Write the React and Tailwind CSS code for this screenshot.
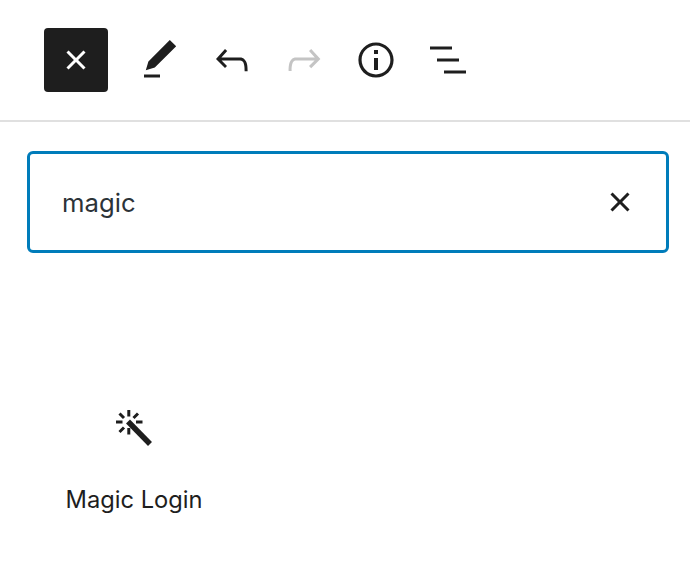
const Icon = ({ d, className = "" }) => (
  <svg viewBox="0 0 24 24" className={`w-12 h-12 fill-current ${className}`}>
    <path d={d} />
  </svg>
);

const closeSmall =
  "M12 13.06l3.712 3.713 1.061-1.06L13.061 12l3.712-3.712-1.06-1.06L12 10.938 8.288 7.227l-1.061 1.06L10.939 12l-3.712 3.712 1.06 1.061L12 13.061z";
const pencil = "M20.1 5.1L16.9 2 6.2 12.7l-1.3 4.4 4.5-1.3L20.1 5.1zM4 20.8h8v-1.5H4v1.5z";
const undo =
  "M18.3 11.7c-.6-.6-1.4-.9-2.3-.9H6.7l2.9-3.3-1.1-1-4.5 5L8.5 16l1-1-2.7-2.7H16c.5 0 .9.2 1.3.5 1 1 1 3.4 1 4.5v.3h1.5v-.2c0-1.5 0-4.3-1.5-5.7z";
const redo =
  "M15.6 6.5l-1.1 1 2.9 3.3H8c-.9 0-1.7.3-2.3.9-1.4 1.5-1.4 4.2-1.4 5.6v.2h1.5v-.3c0-1.1 0-3.5 1-4.5.3-.3.7-.5 1.3-.5h9.2L14.5 15l1.1 1.1 4.6-4.6-4.6-5z";
const info =
  "M12 3.2c-4.8 0-8.8 3.9-8.8 8.8 0 4.8 3.9 8.8 8.8 8.8 4.8 0 8.8-3.9 8.8-8.8 0-4.8-4-8.8-8.8-8.8zm0 16c-4 0-7.2-3.3-7.2-7.2C4.8 8 8 4.8 12 4.8s7.2 3.3 7.2 7.2c0 4-3.2 7.2-7.2 7.2zM11 17h2v-6h-2v6zm0-8h2V7h-2v2z";
const listView = "M0 5.2h11v1.5H0V5.2zM3.5 11.2h11v1.5h-11v-1.5zM7 17.2h11v1.5H7v-1.5z";

// wand with sparkle rays around the tip
const WandIcon = () => (
  <svg viewBox="0 0 48 48" className="w-12 h-12 text-[#1e1e1e]" fill="none" stroke="currentColor">
    <path d="M18 14.5L40 37" strokeWidth="5.5" />
    <path
      d="M18.8 3v6.5M18.8 21v6.5M6 15h6.5M26 15h6.5M9.5 6.5l4.5 4.5M28 6.5L23.5 11M9.5 25l4.5-4.5"
      strokeWidth="3"
    />
  </svg>
);

export default function App() {
  return (
    <div className="w-[690px] h-[582px] bg-white overflow-hidden font-['Inter',sans-serif] text-[#1e1e1e]">
      {/* top toolbar */}
      <div className="h-[122px] border-b-2 border-[#e0e0e0] pl-11 pt-7 flex items-start">
        <button className="w-16 h-16 bg-[#1e1e1e] text-white rounded-[4px] flex items-center justify-center">
          <Icon d={closeSmall} />
        </button>
        <div className="flex items-center gap-6 ml-7 h-16">
          <Icon d={pencil} />
          <Icon d={undo} />
          <Icon d={redo} className="text-[#c4c4c4]" />
          <Icon d={info} />
          <svg viewBox="-3 0 24 24" className="w-12 h-12 fill-current">
            <path d={listView} />
          </svg>
        </div>
      </div>

      {/* search */}
      <div className="ml-[27px] mt-[29px] w-[642px] h-[102px] border-[3px] border-[#007cba] rounded-[6px] flex items-center justify-between pl-8 pr-[22px]">
        <span className="pt-0.5 text-[25.7px] leading-none text-[#2c3338]">magic</span>
        <Icon d={closeSmall} />
      </div>

      {/* results */}
      <div className="mt-[154px] ml-11 w-[180px] flex flex-col items-center">
        <WandIcon />
        <span className="mt-[31px] text-[23.7px] leading-7 whitespace-nowrap">Magic Login</span>
      </div>
    </div>
  );
}
